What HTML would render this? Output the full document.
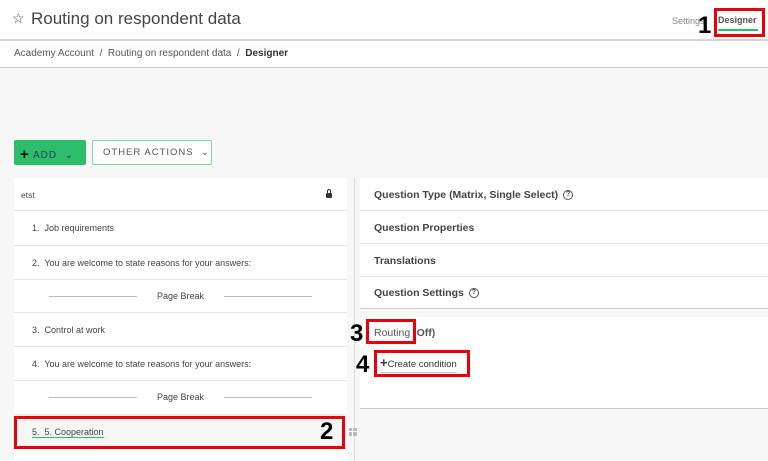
<!DOCTYPE html>
<html><head><style>
*{margin:0;padding:0;box-sizing:border-box}
body{width:768px;height:461px;overflow:hidden;background:#f7f7f7;font-family:"Liberation Sans",sans-serif;color:#333;position:relative}
.a{position:absolute}
.hdr{left:0;top:0;width:768px;height:41px;background:#fff;border-bottom:2px solid #d5d5d5}
.bc{left:0;top:41px;width:768px;height:27px;background:#fff;border-bottom:1px solid #ccc;font-size:10px;color:#555;padding:7px 0 0 14px}
.red{border:3px solid #e8000b}
.row{position:absolute;left:14px;width:333px;background:#fff;border-bottom:1px solid #e6e6e6;font-size:9px;color:#444;padding-left:18px}
.rp{position:absolute;left:360px;width:408px;background:#fff;border-bottom:1px solid #e6e6e6;font-size:10.5px;font-weight:bold;color:#444;padding-left:14px}
.num{position:absolute;font-weight:bold;font-size:24px;color:#000}
.pb{text-align:center;padding-left:0}
.pb span{display:inline-block;width:88px;height:1px;background:#bbb;vertical-align:middle;margin:0 20px}
.q{display:inline-block;width:10px;height:10px;border:1.3px solid #555;border-radius:50%;font-size:7px;text-align:center;line-height:8px;vertical-align:middle;margin-left:5px}
</style></head><body>
<div class="a hdr"></div>
<div class="a" style="left:12px;top:10px;font-size:14px;color:#444">☆</div>
<div class="a" style="left:31px;top:9px;font-size:17px;color:#444">Routing on respondent data</div>
<div class="a" style="left:672px;top:16px;font-size:9px;color:#888">Settings</div>
<div class="a" style="left:718px;top:15px;font-size:9px;font-weight:bold;color:#555">Designer</div>
<div class="a" style="left:718px;top:29px;width:40px;height:1.5px;background:#2ebd6b"></div>
<div class="a red" style="left:714px;top:8px;width:51px;height:29px"></div>
<div class="num" style="left:698px;top:12px">1</div>
<div class="a bc">Academy Account &nbsp;/&nbsp; Routing on respondent data &nbsp;/&nbsp; <b style="color:#333">Designer</b></div>

<div class="a" style="left:14px;top:140px;width:72px;height:25px;background:#2ebd6b;border-radius:2px;font-size:10px;color:#145;letter-spacing:1px;padding:5px 0 0 6px"><b style="font-size:15px;color:#111;position:relative;top:1px">+</b> ADD &nbsp;⌄</div>
<div class="a" style="left:92px;top:140px;width:120px;height:25px;background:#fff;border:1px solid #7fd6a3;border-radius:2px;font-size:9.5px;color:#555;letter-spacing:1px;padding:6px 0 0 10px">OTHER ACTIONS &nbsp;⌄</div>

<div class="a" style="left:354px;top:178px;width:1px;height:283px;background:#ddd"></div>
<div class="row" style="top:178px;height:33px;padding:12px 0 0 7px;font-size:8.5px">etst</div>
<div class="a" style="left:326px;top:193px;width:6px;height:5px;background:#333;border-radius:1px"></div>
<div class="a" style="left:327px;top:189px;width:4px;height:5px;border:1.2px solid #333;border-bottom:none;border-radius:2px 2px 0 0"></div>
<div class="row" style="top:211px;height:35px;padding-top:12px">1.&nbsp; Job requirements</div>
<div class="row" style="top:246px;height:34px;padding-top:12px">2.&nbsp; You are welcome to state reasons for your answers:</div>
<div class="row pb" style="top:280px;height:33px;padding-top:11px"><span></span>Page Break<span></span></div>
<div class="row" style="top:313px;height:34px;padding-top:12px">3.&nbsp; Control at work</div>
<div class="row" style="top:347px;height:34px;padding-top:12px">4.&nbsp; You are welcome to state reasons for your answers:</div>
<div class="row pb" style="top:381px;height:34px;padding-top:11px"><span></span>Page Break<span></span></div>
<div class="row" style="top:415px;height:34px;padding-top:12px;background:#f5f5f5"><span style="border-bottom:1.5px solid #2ebd6b">5.&nbsp; 5. Cooperation</span></div>
<div class="row" style="top:449px;height:12px;border:none"></div>
<div class="a red" style="left:14px;top:416px;width:331px;height:33px"></div>
<div class="num" style="left:320px;top:418px">2</div>
<div class="a" style="left:349px;top:428px;width:8px;height:8px;background:
linear-gradient(#fff,#fff) 3px 0/1px 8px no-repeat,linear-gradient(#fff,#fff) 0 3px/8px 1px no-repeat,#bbb"></div>

<div class="rp" style="top:178px;height:33px;padding-top:11px">Question Type (Matrix, Single Select)<span class="q">?</span></div>
<div class="rp" style="top:211px;height:33px;padding-top:11px">Question Properties</div>
<div class="rp" style="top:244px;height:33px;padding-top:11px">Translations</div>
<div class="rp" style="top:277px;height:32px;padding-top:10px;border-bottom:1px solid #ccc">Question Settings<span class="q">?</span></div>
<div class="rp" style="top:317px;height:92px;padding-top:10px;border-bottom:1px solid #ccc;font-weight:normal;color:#555">Routing <b>(Off)</b></div>
<div class="a" style="left:380px;top:355px;font-size:9.5px;color:#333;border-bottom:1px solid #ccc;padding-bottom:2px"><b style="font-size:13px">+</b>Create condition</div>
<div class="a red" style="left:366px;top:319px;width:50px;height:25px"></div>
<div class="num" style="left:350px;top:320px">3</div>
<div class="a red" style="left:374px;top:350px;width:96px;height:27px"></div>
<div class="num" style="left:356px;top:351px">4</div>
</body></html>
